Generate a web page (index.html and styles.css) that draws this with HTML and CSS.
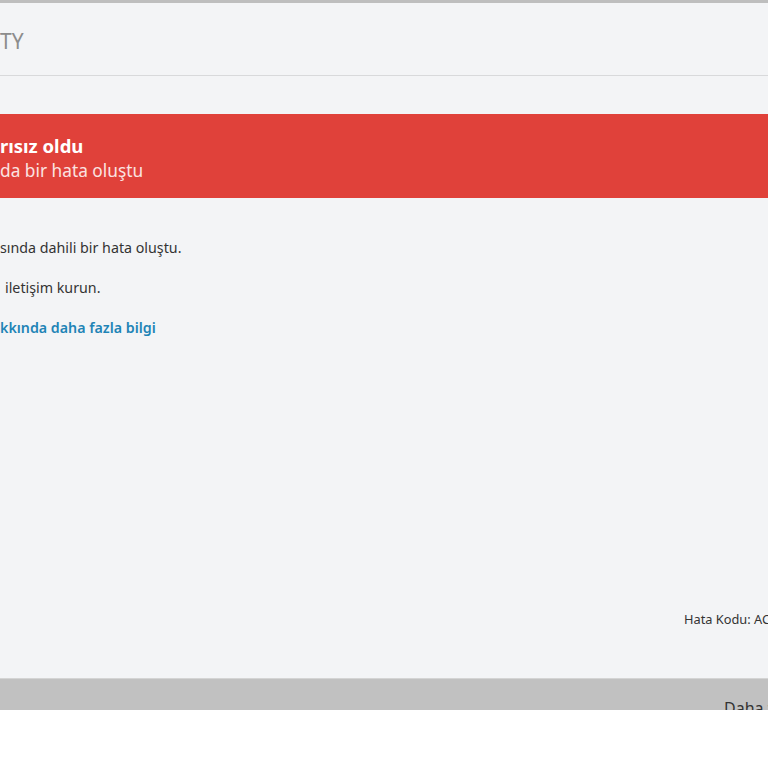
FILE: index.html
```html
<!DOCTYPE html>
<html lang="tr">
<head>
  <meta charset="UTF-8">
  <title>Oturum açma başarısız oldu</title>
  <meta name="viewport" content="width=device-width, initial-scale=1.0">
  <link rel="stylesheet" href="styles.css">
</head>
<body>
  <div class="frame">
    <!-- Brand header -->
    <div class="header">
      <span class="brand">TY</span>
    </div>

    <!-- Error banner -->
    <div class="banner">
      <div class="banner-title">rısız oldu</div>
      <div class="banner-sub">da bir hata oluştu</div>
    </div>

    <!-- Error details -->
    <div class="content">
      <p class="line">sında dahili bir hata oluştu.</p>
      <p class="line indent">iletişim kurun.</p>
      <p class="line"><a href="#" class="more-link">kkında daha fazla bilgi</a></p>

      <div class="code-row">
        <span class="code">Hata Kodu: AC</span>
      </div>
    </div>

    <!-- Bottom bar -->
    <div class="bottom-bar">
      <span class="bottom-link">Daha fazla</span>
    </div>
  </div>
</body>
</html>
```

FILE: styles.css
```css
* {
  box-sizing: border-box;
}

body {
  margin: 0;
  background: #fff;
  font-family: 'Noto Sans', 'Open Sans', sans-serif;
  color: #333;
}

.frame {
  height: 710px;
  overflow: hidden;
  display: flex;
  flex-direction: column;
  background: #f3f4f6;
  border-top: 3px solid #bebebe;
}

.header {
  height: 73px;
  flex-shrink: 0;
  display: flex;
  align-items: center;
  border-bottom: 1px solid #d8d9db;
}

.brand {
  font-size: 21px;
  color: #8c8c8c;
  padding-top: 3px;
}

.banner {
  margin-top: 38px;
  height: 84px;
  flex-shrink: 0;
  background: #e0413a;
  padding-top: 20px;
  white-space: nowrap;
}

.banner-title {
  font-size: 18.5px;
  font-weight: bold;
  color: #fff;
  line-height: 24px;
}

.banner-sub {
  font-size: 17.3px;
  color: #fbe3e1;
  line-height: 24px;
  margin-top: 1px;
}

.content {
  flex: 1;
  display: flex;
  flex-direction: column;
  padding-top: 40px;
  white-space: nowrap;
}

.line {
  margin: 0 0 20px 0;
  font-size: 14.25px;
  line-height: 20px;
  color: #333;
}

.line.indent {
  padding-left: 5px;
}

.more-link {
  color: #1f84b6;
  font-weight: 600;
  text-decoration: none;
}

.code-row {
  margin-top: auto;
  padding-left: 684px;
  padding-bottom: 49px;
}

.code {
  font-size: 12.8px;
  line-height: 16px;
  color: #333;
}

.bottom-bar {
  height: 32px;
  flex-shrink: 0;
  background: #c1c1c1;
  border-top: 1px solid #d4d4d4;
  padding-left: 724px;
  padding-top: 18px;
  white-space: nowrap;
}

.bottom-link {
  font-size: 16px;
  color: #333;
}
```
